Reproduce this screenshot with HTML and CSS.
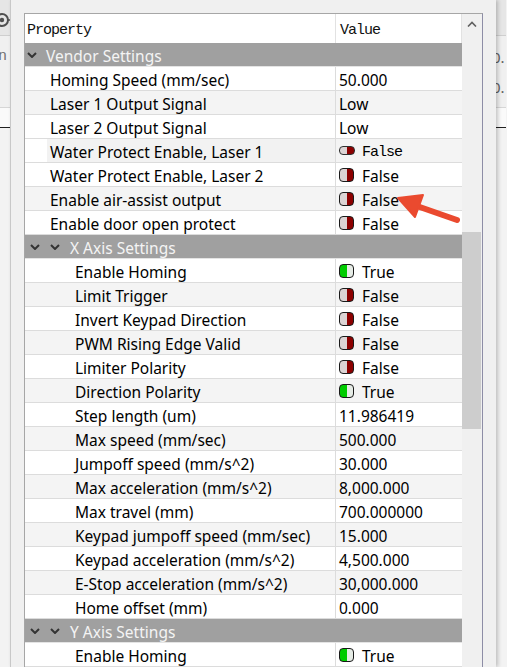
FILE: index.html
```html
<!DOCTYPE html>
<html lang="en">
<head>
    <meta charset="UTF-8">
    <title>Device Settings</title>
    <link rel="stylesheet" href="styles.css">
</head>
<body>
    <!-- window behind, left edge -->
    <div class="behind behind-left">
        <div class="bh-top">
            <svg class="target" width="10" height="16" viewBox="0 0 10 16"><circle cx="2" cy="8" r="6" fill="none" stroke="#505050" stroke-width="2"/><circle cx="2" cy="8" r="2.2" fill="#505050"/><line x1="8" y1="8" x2="10" y2="8" stroke="#505050" stroke-width="1.5"/></svg>
        </div>
        <div class="bh-mid"><span class="bh-text">n'</span></div>
        <div class="bh-low"></div>
        <div class="bh-rule"></div>
    </div>

    <div class="dialog">
        <div class="tree">
            <div class="view">
                <div class="head">
                    <div class="hcell prop">Property</div>
                    <div class="hcell val">Value</div>
                </div>

                <div class="row group">
                    <div class="cell prop l0"><svg class="chev" viewBox="0 0 10 6"><polyline points="1,1 5,5 9,1"/></svg>Vendor Settings</div>
                    <div class="cell val"></div>
                </div>
                <div class="row">
                    <div class="cell prop l1">Homing Speed (mm/sec)</div>
                    <div class="cell val">50.000</div>
                </div>
                <div class="row alt">
                    <div class="cell prop l1">Laser 1 Output Signal</div>
                    <div class="cell val">Low</div>
                </div>
                <div class="row">
                    <div class="cell prop l1">Laser 2 Output Signal</div>
                    <div class="cell val">Low</div>
                </div>
                <div class="row alt current">
                    <div class="cell prop l1">Water Protect Enable, Laser 1</div>
                    <div class="cell val"><span class="pill off"></span><span class="mono">False</span></div>
                </div>
                <div class="row">
                    <div class="cell prop l1">Water Protect Enable, Laser 2</div>
                    <div class="cell val"><span class="switch off"></span>False</div>
                </div>
                <div class="row alt">
                    <div class="cell prop l1">Enable air-assist output</div>
                    <div class="cell val"><span class="switch off"></span>False</div>
                </div>
                <div class="row">
                    <div class="cell prop l1">Enable door open protect</div>
                    <div class="cell val"><span class="switch off"></span>False</div>
                </div>

                <div class="row group">
                    <div class="cell prop l0b"><svg class="chev" viewBox="0 0 10 6"><polyline points="1,1 5,5 9,1"/></svg><svg class="chev second" viewBox="0 0 10 6"><polyline points="1,1 5,5 9,1"/></svg>X Axis Settings</div>
                    <div class="cell val"></div>
                </div>
                <div class="row">
                    <div class="cell prop l2">Enable Homing</div>
                    <div class="cell val"><span class="switch on"></span>True</div>
                </div>
                <div class="row alt">
                    <div class="cell prop l2">Limit Trigger</div>
                    <div class="cell val"><span class="switch off"></span>False</div>
                </div>
                <div class="row">
                    <div class="cell prop l2">Invert Keypad Direction</div>
                    <div class="cell val"><span class="switch off"></span>False</div>
                </div>
                <div class="row alt">
                    <div class="cell prop l2">PWM Rising Edge Valid</div>
                    <div class="cell val"><span class="switch off"></span>False</div>
                </div>
                <div class="row">
                    <div class="cell prop l2">Limiter Polarity</div>
                    <div class="cell val"><span class="switch off"></span>False</div>
                </div>
                <div class="row alt">
                    <div class="cell prop l2">Direction Polarity</div>
                    <div class="cell val"><span class="switch on"></span>True</div>
                </div>
                <div class="row">
                    <div class="cell prop l2">Step length (um)</div>
                    <div class="cell val">11.986419</div>
                </div>
                <div class="row alt">
                    <div class="cell prop l2">Max speed (mm/sec)</div>
                    <div class="cell val">500.000</div>
                </div>
                <div class="row">
                    <div class="cell prop l2">Jumpoff speed (mm/s^2)</div>
                    <div class="cell val">30.000</div>
                </div>
                <div class="row alt">
                    <div class="cell prop l2">Max acceleration (mm/s^2)</div>
                    <div class="cell val">8,000.000</div>
                </div>
                <div class="row">
                    <div class="cell prop l2">Max travel (mm)</div>
                    <div class="cell val">700.000000</div>
                </div>
                <div class="row alt">
                    <div class="cell prop l2">Keypad jumpoff speed (mm/sec)</div>
                    <div class="cell val">15.000</div>
                </div>
                <div class="row">
                    <div class="cell prop l2">Keypad acceleration (mm/s^2)</div>
                    <div class="cell val">4,500.000</div>
                </div>
                <div class="row alt">
                    <div class="cell prop l2">E-Stop acceleration (mm/s^2)</div>
                    <div class="cell val">30,000.000</div>
                </div>
                <div class="row">
                    <div class="cell prop l2">Home offset (mm)</div>
                    <div class="cell val">0.000</div>
                </div>

                <div class="row group">
                    <div class="cell prop l0b"><svg class="chev" viewBox="0 0 10 6"><polyline points="1,1 5,5 9,1"/></svg><svg class="chev second" viewBox="0 0 10 6"><polyline points="1,1 5,5 9,1"/></svg>Y Axis Settings</div>
                    <div class="cell val"></div>
                </div>
                <div class="row">
                    <div class="cell prop l2">Enable Homing</div>
                    <div class="cell val"><span class="switch on"></span>True</div>
                </div>
            </div>

            <!-- Scrollbar -->
            <div class="scrollbar">
                <div class="sb-button">
                    <svg width="10" height="6" viewBox="0 0 10 6"><polyline points="1,5.5 5,1.5 9,5.5" fill="none" stroke="#606060" stroke-width="1.6"/></svg>
                </div>
                <div class="thumb"></div>
            </div>
        </div>
    </div>

    <!-- window behind, right edge -->
    <div class="behind behind-right">
        <div class="bh-top"></div>
        <div class="bh-mid">
            <span class="bh-num">0.</span>
            <span class="bh-num">0.</span>
        </div>
        <div class="bh-low"></div>
        <div class="bh-rule"></div>
    </div>

    <!-- red pointer arrow -->
    <svg class="pointer" width="507" height="667" viewBox="0 0 507 667">
        <line x1="457" y1="220" x2="414" y2="205" stroke="#ea4a2f" stroke-width="6" stroke-linecap="round"/>
        <polygon points="398,198 423,195 415,217" fill="#ea4a2f" stroke="#ea4a2f" stroke-width="2" stroke-linejoin="round"/>
    </svg>
</body>
</html>
```

FILE: styles.css
```css
body {
    margin: 0;
    width: 507px;
    height: 667px;
    overflow: hidden;
    display: flex;
    background: #f3f3f3;
    font-family: 'Noto Sans', sans-serif;
    font-size: 15.5px;
    color: #000;
}

/* Bits of the window sitting behind the dialog */
.behind {
    width: 10px;
    flex: none;
    display: flex;
    flex-direction: column;
    overflow: hidden;
}

    .behind .bh-top {
        height: 35px;
        background: #e6e6e6;
        border-bottom: 1px solid #cfcfcf;
    }

    .behind .bh-mid {
        height: 71px;
        background: #f0f0f0;
        border-bottom: 1px solid #d6d6d6;
    }

    .behind .bh-low {
        height: 19px;
        background: #fafafa;
    }

    .behind .bh-rule {
        height: 1px;
        background: #202020;
    }

.target {
    display: block;
    margin-top: 12px;
}

.bh-text {
    display: block;
    margin-top: 12px;
    margin-left: -2px;
    font-family: 'Liberation Mono', monospace;
    font-size: 15px;
    color: #707070;
}

.bh-num {
    display: block;
    margin-left: -4px;
    height: 30px;
    line-height: 30px;
    font-size: 15px;
    color: #606060;
}

    .bh-num:first-child {
        margin-top: 6px;
    }

/* Dialog */
.dialog {
    width: 486px;
    flex: none;
    position: relative;
    z-index: 1;
    background: #f0f0f0;
    border-left: 1px solid #c8c8c8;
    box-shadow: 2px 0 4px rgba(0, 0, 0, 0.22);
    padding: 13px 0 0 13px;
    box-sizing: border-box;
}

.tree {
    width: 459px;
    height: 700px;
    box-sizing: border-box;
    display: flex;
    border: 1px solid #a6a6a6;
    border-right-color: #8d8da6;
    border-bottom: none;
}

.view {
    width: 437px;
    flex: none;
    background: #fff;
}

/* Header */
.head {
    display: flex;
    height: 29px;
    background: #fff;
}

.hcell {
    font-family: 'Liberation Mono', monospace;
    font-size: 15px;
    letter-spacing: -1px;
    line-height: 29px;
    padding-top: 2px;
    box-sizing: border-box;
    color: #111;
}

    .hcell.prop {
        width: 311px;
        padding-left: 2px;
        border-right: 1px solid #e2e2e2;
    }

    .hcell.val {
        flex: 1;
        padding-left: 4px;
        border-right: 1px solid #e2e2e2;
    }

/* Rows */
.row {
    display: flex;
    height: 24px;
    box-sizing: border-box;
    border-bottom: 1px solid #dcdcdc;
    background: #fff;
}

    .row.alt {
        background: #f4f4f4;
    }

    .row.current .cell.prop {
        background: linear-gradient(to right, #fff 22px, #f2f2f2 22px);
    }

.cell {
    line-height: 23px;
    padding-top: 4px;
    white-space: nowrap;
    overflow: hidden;
    box-sizing: border-box;
    display: flex;
    align-items: center;
}

    .cell.prop {
        width: 311px;
        border-right: 1px solid #dcdcdc;
    }

    .cell.val {
        flex: 1;
        padding-left: 3px;
    }

    .cell.l0 {
        padding-left: 2px;
    }

    .cell.l0b {
        padding-left: 5px;
    }

    .cell.l1 {
        padding-left: 25px;
    }

    .cell.l2 {
        padding-left: 50px;
    }

/* Group headers */
.row.group {
    background: #a0a0a0;
    border-bottom-color: #e4e4e4;
    color: #f4f4f4;
}

    .row.group .cell.prop {
        border-right: none;
    }

.chev {
    width: 10px;
    height: 6px;
    margin-top: -4px;
    margin-right: 9px;
    flex: none;
}

    .chev polyline {
        fill: none;
        stroke: #333;
        stroke-width: 2;
    }

    .chev.second {
        margin-left: 1px;
        margin-right: 10px;
    }

/* Boolean switch icons */
.switch {
    width: 15px;
    height: 14px;
    box-sizing: border-box;
    border: 1.5px solid #1a1a1a;
    border-radius: 4px;
    margin-top: -4px;
    margin-right: 8px;
    flex: none;
}

    .switch.off {
        background: linear-gradient(to right, #dcd4d4 50%, #8c0000 50%);
    }

    .switch.on {
        background: linear-gradient(to right, #00cc00 50%, #e6ece6 50%);
    }

.pill {
    width: 16px;
    height: 9px;
    box-sizing: border-box;
    border: 1px solid #303030;
    border-radius: 4px;
    margin-top: -4px;
    margin-right: 7px;
    flex: none;
    background: linear-gradient(to right, #dcd4d4 50%, #8c0000 50%);
}

.mono {
    font-family: 'Liberation Mono', monospace;
    font-size: 15px;
    letter-spacing: -1px;
}

/* Scrollbar */
.scrollbar {
    width: 20px;
    flex: none;
    background: #f0f0f0;
}

.sb-button {
    height: 20px;
    display: flex;
    justify-content: center;
    padding-top: 7px;
    box-sizing: border-box;
}

.thumb {
    margin-top: 198px;
    width: 19px;
    height: 197px;
    background: #cdcdcd;
}

/* Annotation arrow */
.pointer {
    position: absolute;
    left: 0;
    top: 0;
    z-index: 2;
    pointer-events: none;
}
```
